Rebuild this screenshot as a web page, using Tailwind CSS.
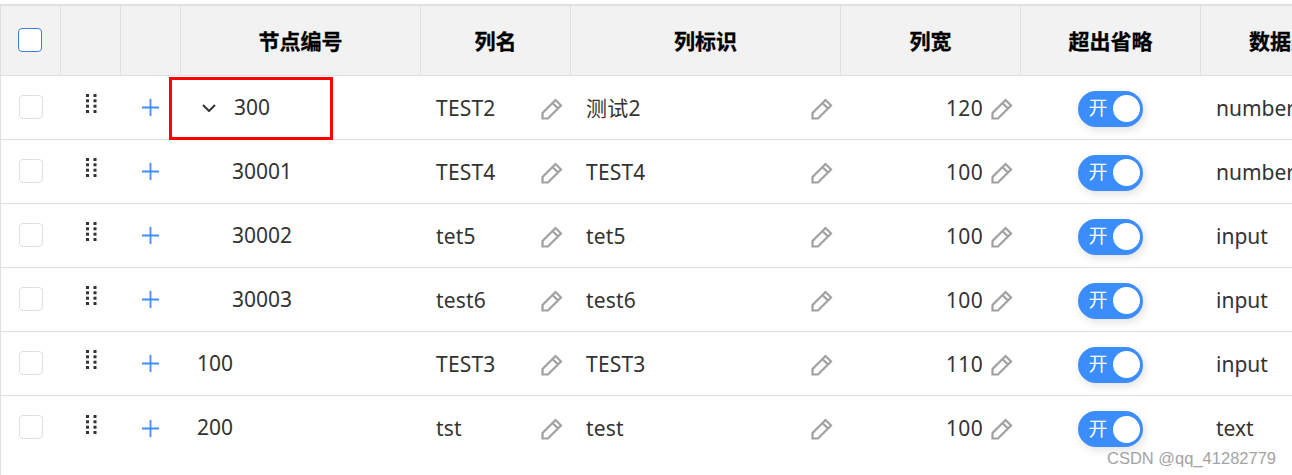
<!DOCTYPE html>
<html lang="zh-CN">
<head>
    <meta charset="UTF-8">
    <title>表格列配置</title>
    <script src="https://cdn.jsdelivr.net/npm/@tailwindcss/browser@4"></script>
</head>
<body class="bg-white overflow-hidden h-[475px] font-['Noto_Sans','Noto_Sans_CJK_SC',sans-serif] text-[21px] text-[#333]">
    <div class="relative h-[475px] w-[1292px] overflow-hidden pt-1">
        <div class="h-full w-[1381px] border-t-2 border-l border-[#e0e0e0]">
            <div class="grid h-[70px] grid-cols-[60px_60px_60px_240px_150px_270px_180px_180px_180px] border-b border-[#e0e0e0] bg-[#f2f2f2] font-bold text-black [-webkit-text-stroke:0.3px_black]">
                <div class="flex items-center border-r border-[#e0e0e0] pl-[17px] pb-px">
                    <span class="h-6 w-6 rounded border border-[#3f7be0] bg-white"></span>
                </div>
                <div class="border-r border-[#e0e0e0]"></div>
                <div class="border-r border-[#e0e0e0]"></div>
                <div class="flex items-center justify-center border-r border-[#e0e0e0] pt-[2px]">节点编号</div>
                <div class="flex items-center justify-center border-r border-[#e0e0e0] pt-[2px]">列名</div>
                <div class="flex items-center justify-center border-r border-[#e0e0e0] pt-[2px]">列标识</div>
                <div class="flex items-center justify-center border-r border-[#e0e0e0] pt-[2px]">列宽</div>
                <div class="flex items-center justify-center border-r border-[#e0e0e0] pt-[2px]">超出省略</div>
                <div class="flex items-center justify-center pt-[2px]">数据类型</div>
            </div>
            <div id="rows"></div>
        </div>

        <!-- 红色标注框 -->
        <div class="absolute left-[169px] top-[77px] h-[63px] w-[164px] border-[3px] border-[#f00]"></div>
        <!-- 水印 -->
        <div class="absolute left-[1107px] top-[448px] font-['Liberation_Sans',sans-serif] text-[16.500px] leading-5 text-[#a3a3a3]">CSDN @qq_41282779</div>
    </div>

    <script>
        const data = [
            { id: '300', level: 'parent', name: 'TEST2', key: '测试2', width: 120, type: 'number' },
            { id: '30001', level: 'child', name: 'TEST4', key: 'TEST4', width: 100, type: 'number' },
            { id: '30002', level: 'child', name: 'tet5', key: 'tet5', width: 100, type: 'input' },
            { id: '30003', level: 'child', name: 'test6', key: 'test6', width: 100, type: 'input' },
            { id: '100', level: 'root', name: 'TEST3', key: 'TEST3', width: 110, type: 'input' },
            { id: '200', level: 'root', name: 'tst', key: 'test', width: 100, type: 'text' }
        ];

        const pencil = `<svg class="h-[22px] w-[22px] shrink-0" viewBox="0 0 22 22" fill="none" stroke="#a0a0a0" stroke-width="2.200"><path d="M1.500 20.500V15L14.500 2L20 7.500L7 20.500Z M11.500 5L17 10.500"/></svg>`;

        const grip = `<svg class="h-5 w-3" viewBox="0 0 12 20" fill="#333"><rect x="1" y="1" width="3" height="3"/><rect x="8.500" y="1" width="3" height="3"/><rect x="1" y="6.300" width="3" height="3"/><rect x="8.500" y="6.300" width="3" height="3"/><rect x="1" y="11.700" width="3" height="3"/><rect x="8.500" y="11.700" width="3" height="3"/><rect x="1" y="17" width="3" height="3"/><rect x="8.500" y="17" width="3" height="3"/></svg>`;

        const plus = `<svg class="h-[17px] w-[17px] -translate-x-px" viewBox="0 0 17 17" stroke="#3f8efc" stroke-width="1.800"><path d="M8.500 0V17M0 8.500H17"/></svg>`;

        const chevron = `<svg class="h-2 w-[14px] -translate-x-px" viewBox="0 0 14 8" fill="none" stroke="#333" stroke-width="2"><path d="M1 1L7 7L13 1"/></svg>`;

        function idCell(row) {
            if (row.level === 'parent') {
                return `<div class="flex items-center pl-[22px]">${chevron}<span class="ml-[17px]">${row.id}</span></div>`;
            }
            if (row.level === 'child') {
                return `<div class="flex items-center pl-[51px]">${row.id}</div>`;
            }
            return `<div class="flex items-center pl-4">${row.id}</div>`;
        }

        document.getElementById('rows').innerHTML = data.map((row, i) => `
            <div class="grid h-16 grid-cols-[60px_60px_60px_240px_150px_270px_180px_180px_180px] border-[#e0e0e0] ${i < data.length - 1 ? 'border-b' : ''}">
                <div class="flex items-center pl-[18px] pb-[2px]"><span class="h-6 w-6 rounded border border-[#e0e0e0] bg-white"></span></div>
                <div class="flex items-center justify-center pb-[9px]">${grip}</div>
                <div class="flex items-center justify-center">${plus}</div>
                ${idCell(row)}
                <div class="flex items-center justify-between pl-[15px] pr-2 pt-[2px]"><span class="tracking-[0.2px]">${row.name}</span>${pencil}</div>
                <div class="flex items-center justify-between pl-[15px] pr-2 pt-[2px]"><span class="tracking-[0.2px]">${row.key}</span>${pencil}</div>
                <div class="flex items-center justify-end gap-2 pr-2 pt-[2px]"><span class="tracking-[0.3px]">${row.width}</span>${pencil}</div>
                <div class="flex items-center justify-center pt-[2px] pr-[2px]">
                    <div class="flex h-9 w-[65px] items-center justify-between rounded-full bg-[#3b8dfb] pl-[11px] pr-[3px] text-[19px] text-white shadow-[2px_3px_8px_rgba(0,0,0,0.12)]">
                        <span>开</span><span class="h-[27px] w-[27px] rounded-full bg-white"></span>
                    </div>
                </div>
                <div class="flex items-center pl-[15px] pt-[2px]">${row.type}</div>
            </div>`).join('');
    </script>
</body>
</html>
